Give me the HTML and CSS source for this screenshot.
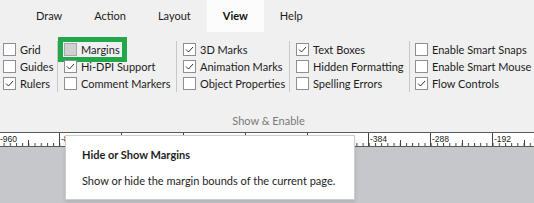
FILE: index.html
```html
<!DOCTYPE html>
<html>
<head>
<meta charset="utf-8">
<link rel="stylesheet" href="styles.css">
</head>
<body>
<div class="app">
  <nav class="tabs">
    <span class="tab">Draw</span>
    <span class="tab">Action</span>
    <span class="tab">Layout</span>
    <span class="tab active">View</span>
    <span class="tab">Help</span>
  </nav>
  <section class="ribbon">
    <div class="group">
      <div class="col c1">
        <div class="item"><span class="cb"></span>Grid</div>
        <div class="item"><span class="cb"></span>Guides</div>
        <div class="item"><span class="cb"><svg viewBox="0 0 11 11"><polyline points="2,5.5 4.5,8 9,3"/></svg></span>Rulers</div>
      </div>
      <div class="col c2">
        <div class="item"><span class="cb dim"></span>Margins<span class="highlight"></span></div>
        <div class="item"><span class="cb"><svg viewBox="0 0 11 11"><polyline points="2,5.5 4.5,8 9,3"/></svg></span>Hi-DPI Support</div>
        <div class="item"><span class="cb"></span>Comment Markers</div>
      </div>
      <div class="col c3">
        <div class="item"><span class="cb"><svg viewBox="0 0 11 11"><polyline points="2,5.5 4.5,8 9,3"/></svg></span>3D Marks</div>
        <div class="item"><span class="cb"><svg viewBox="0 0 11 11"><polyline points="2,5.5 4.5,8 9,3"/></svg></span>Animation Marks</div>
        <div class="item"><span class="cb"></span>Object Properties</div>
      </div>
      <div class="col c4">
        <div class="item"><span class="cb"><svg viewBox="0 0 11 11"><polyline points="2,5.5 4.5,8 9,3"/></svg></span>Text Boxes</div>
        <div class="item"><span class="cb"></span>Hidden Formatting</div>
        <div class="item"><span class="cb"></span>Spelling Errors</div>
      </div>
      <div class="col c5">
        <div class="item"><span class="cb"></span>Enable Smart Snaps</div>
        <div class="item"><span class="cb"></span>Enable Smart Mouse</div>
        <div class="item"><span class="cb"><svg viewBox="0 0 11 11"><polyline points="2,5.5 4.5,8 9,3"/></svg></span>Flow Controls</div>
      </div>
    </div>
    <div class="group-label">Show &amp; Enable</div>
  </section>
  <div class="ruler">
    <svg width="534" height="13" viewBox="0 0 534 13">
      <defs>
        <pattern id="minor" x="-2.6" y="0" width="6.19" height="13" patternUnits="userSpaceOnUse">
          <rect x="0" y="10" width="1" height="3" fill="#444"/>
        </pattern>
      </defs>
      <rect x="0" y="0" width="534" height="13" fill="url(#minor)"/>
      <g fill="#444">
        <rect x="28" y="7" width="1" height="6"/>
        <rect x="90" y="7" width="1" height="6"/>
        <rect x="152" y="7" width="1" height="6"/>
        <rect x="214" y="7" width="1" height="6"/>
        <rect x="276" y="7" width="1" height="6"/>
        <rect x="338" y="7" width="1" height="6"/>
        <rect x="400" y="7" width="1" height="6"/>
        <rect x="462" y="7" width="1" height="6"/>
        <rect x="524" y="7" width="1" height="6"/>
        <rect x="59" y="0" width="1" height="13"/>
        <rect x="121" y="0" width="1" height="13"/>
        <rect x="183" y="0" width="1" height="13"/>
        <rect x="245" y="0" width="1" height="13"/>
        <rect x="307" y="0" width="1" height="13"/>
        <rect x="368" y="0" width="1" height="13"/>
        <rect x="430" y="0" width="1" height="13"/>
        <rect x="492" y="0" width="1" height="13"/>
      </g>
      <g class="rl">
        <text x="0" y="8.5">-960</text>
        <text x="61" y="8.5">-864</text>
        <text x="123" y="8.5">-768</text>
        <text x="185" y="8.5">-672</text>
        <text x="247" y="8.5">-576</text>
        <text x="309" y="8.5">-480</text>
        <text x="370" y="8.5">-384</text>
        <text x="432" y="8.5">-288</text>
        <text x="494" y="8.5">-192</text>
      </g>
    </svg>
  </div>
  <div class="canvas"></div>
  <div class="tooltip">
    <div class="tt-title">Hide or Show Margins</div>
    <div class="tt-body">Show or hide the margin bounds of the current page.</div>
  </div>
</div>
</body>
</html>
```

FILE: styles.css
```css
* { box-sizing: border-box; }
html, body { margin: 0; padding: 0; }
body {
  width: 534px;
  height: 203px;
  overflow: hidden;
  background: #f0f0f0;
  font-family: Lato, "Liberation Sans", sans-serif;
  font-size: 11px;
  color: #1c1c1c;
}
.app {
  position: relative;
  height: 203px;
  display: flex;
  flex-direction: column;
}
.tabs {
  display: flex;
  height: 32px;
  padding-left: 20px;
  flex: none;
}
.tab {
  padding: 0 16px;
  line-height: 32px;
  color: #1c1c1c;
}
.tab.active {
  background: #fcfcfc;
  font-weight: 700;
  color: #111;
}
.ribbon {
  height: 100px;
  flex: none;
  display: flex;
  flex-direction: column;
  padding: 9px 0 4px 3px;
}
.group { display: flex; }
.col { display: flex; flex-direction: column; }
.c1 { width: 54px; }
.c2 { width: 119px; border-left: 1px solid #c8c8c8; padding-left: 6px; }
.c3 { width: 113px; border-left: 1px solid #c8c8c8; padding-left: 6px; }
.c4 { width: 120px; border-left: 1px solid #c8c8c8; padding-left: 6px; }
.c5 { border-left: 1px solid #c8c8c8; padding-left: 5px; }
.item {
  position: relative;
  display: flex;
  align-items: center;
  gap: 4px;
  height: 17px;
  white-space: nowrap;
}
.cb {
  flex: none;
  width: 13px;
  height: 13px;
  border: 1px solid #8e8e96;
  background: #fff;
  display: flex;
}
.cb svg {
  width: 11px;
  height: 11px;
  fill: none;
  stroke: #333;
  stroke-width: 1;
}
.cb.dim {
  background: #d1d1d1;
  border-color: #a8a8a8;
}
.highlight {
  position: absolute;
  left: -6px;
  top: -4px;
  width: 69px;
  height: 25px;
  border: 5px solid #22a84a;
}
.group-label {
  margin-top: auto;
  text-align: center;
  line-height: 14px;
  color: #7a7a7a;
}
.ruler {
  flex: none;
  height: 15px;
  background: #fff;
  border-top: 1px solid #5a5a5a;
  border-bottom: 1px solid #5a5a5a;
}
.ruler svg { display: block; }
.rl text {
  font-family: "Liberation Sans", sans-serif;
  font-size: 8.5px;
  fill: #222;
}
.canvas {
  flex: 1;
  background: #c5c7cb;
}
.tooltip {
  position: absolute;
  left: 65px;
  top: 135px;
  width: 290px;
  height: 65px;
  background: #fff;
  border: 1px solid #cdcdcd;
  box-shadow: 0 2px 4px rgba(0, 0, 0, 0.12);
  padding: 11px 16px;
  color: #1e1e1e;
}
.tt-title { font-weight: 700; line-height: 15px; }
.tt-body { margin-top: 11px; line-height: 15px; }
```
